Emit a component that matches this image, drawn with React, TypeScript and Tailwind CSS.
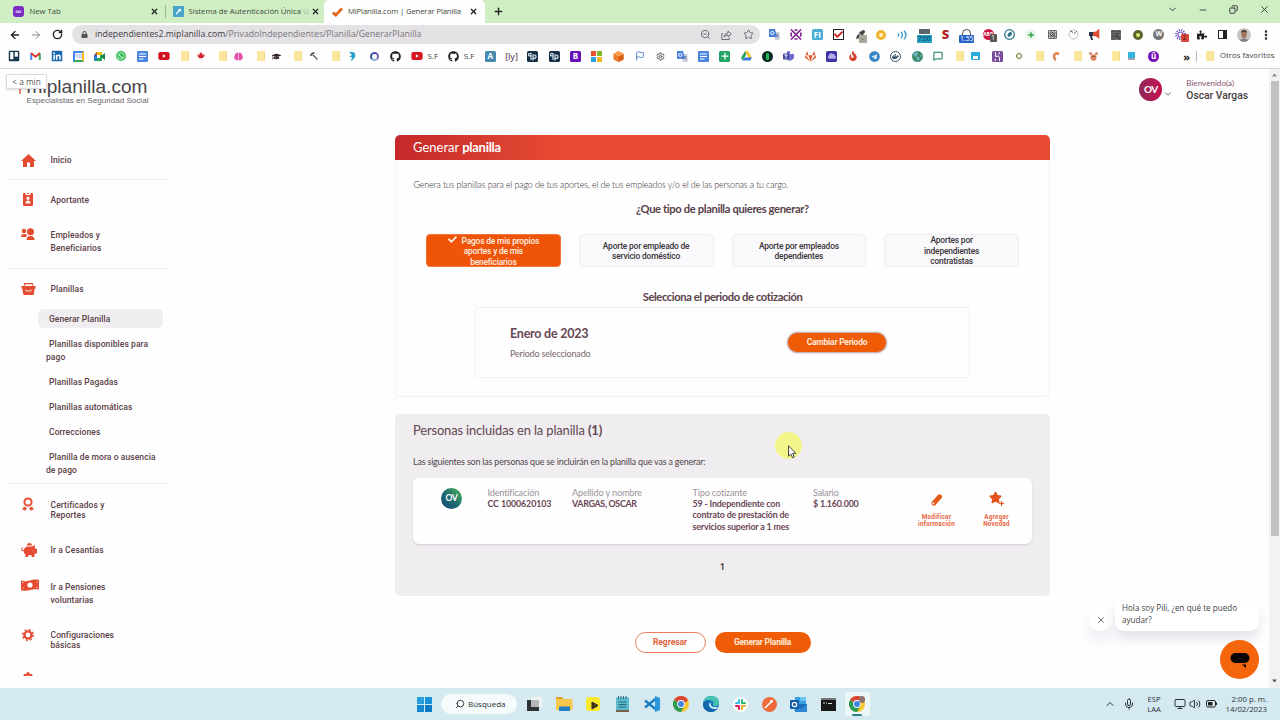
import type { ReactNode } from "react";
import { FaTrello, FaLinkedin, FaWhatsapp, FaYoutube, FaCanadianMapleLeaf, FaBrain, FaGraduationCap, FaGithub, FaGitlab, FaTelegram, FaDocker, FaFire, FaCloud, FaPuzzlePiece, FaPiggyBank, FaCheck, FaStar, FaLock, FaGlobeAmericas, FaEyeDropper, FaCog } from "react-icons/fa";
import { X, Plus, ArrowLeft, ArrowRight, RotateCw, ZoomOut, Star, ChevronDown, ChevronUp, Minus, Copy, Search, Mic, Volume2, Monitor, Flag, Settings, MessageSquare, Atom, MoreVertical } from "lucide-react";

function Slot({ children }: { children: ReactNode }) {
  return <div className="flex w-[21.35px] shrink-0 items-center justify-center">{children}</div>;
}

function Folder() {
  return <div className="h-[10px] w-[8px] shrink-0 rounded-[1px] border-r border-[#f3d983] bg-[#fae69c]" />;
}

function Pair({ children }: { children: ReactNode }) {
  return (
    <div className="flex w-[37.8px] shrink-0 items-center pl-[6.5px]">
      <Folder />
      <div className="ml-[6px] flex w-[12px] justify-center">{children}</div>
    </div>
  );
}

function Tile({ className, children }: { className: string; children?: ReactNode }) {
  return <div className={`flex h-[11px] w-[11px] items-center justify-center rounded-[1.5px] text-[8px] font-bold leading-none text-white ${className}`}>{children}</div>;
}

function Badge({ className, children }: { className: string; children: ReactNode }) {
  return <span className={`absolute rounded-[1px] text-center text-[6.5px] leading-[8px] ${className}`}>{children}</span>;
}

function DocIcon() {
  return (
    <svg width="11" height="11" viewBox="0 0 11 11">
      <rect width="11" height="11" rx="1" fill="#4a86e0" />
      <path d="M2 3h7M2 5.500h7M2 8h4.500" stroke="#fff" strokeWidth="1.2" />
    </svg>
  );
}

function TranslateIcon() {
  return (
    <svg width="11" height="11" viewBox="0 0 11 11">
      <path d="M4 3h6.500v8H6z" fill="#c9ced8" />
      <path d="M0 0h6l2 8H0z" fill="#4a80dc" />
      <circle cx="3.300" cy="4" r="1.600" fill="none" stroke="#fff" strokeWidth=".9" />
      <path d="M7 6h3M8.500 5v1q0 2 1.500 3" stroke="#65758c" strokeWidth=".7" fill="none" />
    </svg>
  );
}

function GmailIcon() {
  return (
    <svg width="11" height="8" viewBox="0 0 11 8">
      <path d="M1.200 8V1.500" stroke="#4285f4" strokeWidth="2" />
      <path d="M9.800 8V1.500" stroke="#34a853" strokeWidth="2" />
      <path d="M1 1l4.500 3.700L10 1" stroke="#e03b2f" strokeWidth="2" fill="none" />
    </svg>
  );
}

function MeetIcon() {
  return (
    <svg width="11" height="9" viewBox="0 0 11 9">
      <path d="M0 3l3-3h5v9H0z" fill="#22a455" />
      <path d="M0 3h3v5H0z" fill="#2a78e4" />
      <path d="M0 3l3-3v3z" fill="#e6402f" />
      <path d="M3 0h5v3H3z" fill="#f6bb17" />
      <path d="M3 3h3v3H3z" fill="#fff" />
      <path d="M7 4l4-3v7L7 5z" fill="#15883e" />
    </svg>
  );
}

function DriveIcon() {
  return (
    <svg width="11" height="10" viewBox="0 0 11 10">
      <path d="M4 0L0 7l1.700 2.500L5.500 3z" fill="#27a45c" />
      <path d="M4 0h3l4 7H7.600z" fill="#f8c52b" />
      <path d="M3.400 6.600H11L9.300 9.500H1.700z" fill="#3b78e0" />
    </svg>
  );
}

function WindowsTiles() {
  return (
    <div className="grid h-[11px] w-[11px] grid-cols-2 gap-[1px]">
      <div className="bg-[#e8502d]" />
      <div className="bg-[#7fb82c]" />
      <div className="bg-[#2ba1e0]" />
      <div className="bg-[#f5b724]" />
    </div>
  );
}

function PatreonTile() {
  return (
    <div className="flex h-[11px] w-[11px] items-center justify-center rounded-[1.5px] bg-[#152f49]">
      <svg width="9" height="9" viewBox="0 0 9 9" fill="none" stroke="#dfe9ef">
        <path d="M3 8V1.500H1.500q-1 0-1 1.200t1 1.200H3" strokeWidth="1.100" />
        <path d="M5 8.500V3h1.500q1.500 0 1.500 1.700T6.500 6.400H5" strokeWidth="1.200" />
      </svg>
    </div>
  );
}

function CheckLogo() {
  return (
    <svg width="11" height="10" viewBox="0 0 11 10">
      <path d="M.8 5.500l3 2.600L10 1.500" stroke="#e2661b" strokeWidth="2.800" fill="none" />
    </svg>
  );
}

function TabStrip() {
  return (
    <div className="flex h-[23px] shrink-0 items-center bg-[#cfeec4] font-['Open_Sans',sans-serif] text-[7.700px] text-[#3f4b3d]">
      <div className="flex w-[165px] items-center pl-[13px]">
        <div className="flex h-[11px] w-[11px] items-center justify-center rounded-[3px] bg-[#7c2bc4] text-[9px] leading-none text-white">∞</div>
        <span className="ml-[5.500px] flex-1">New Tab</span>
        <X size={9} strokeWidth={3.2} color="#222" className="mr-[6px]" />
      </div>
      <div className="h-[13px] w-px bg-[#9ab392]" />
      <div className="flex w-[158px] items-center pl-[6.500px]">
        <div className="flex h-[11px] w-[11px] items-center justify-center bg-[#4aa3cb]">
          <svg width="7" height="7" viewBox="0 0 7 7"><path d="M1 6l3-3" stroke="#fff" strokeWidth="1.300" /><circle cx="4.800" cy="2.200" r="1.400" fill="#fff" /></svg>
        </div>
        <span className="ml-[5px] w-[120px] whitespace-nowrap">Sistema de Autenticación Única <span className="opacity-30">U</span></span>
        <X size={9} strokeWidth={3.2} color="#222" className="ml-[2px]" />
      </div>
      <div className="flex h-full w-[161px] items-center rounded-t-[5px] bg-[#fefefe] pl-[8px]">
        <CheckLogo />
        <span className="ml-[5px] w-[114px] whitespace-nowrap tracking-[-0.130px]">MiPlanilla.com | Generar Planilla</span>
        <X size={9} strokeWidth={3.2} color="#222" className="ml-[6.500px]" />
      </div>
      <Plus size={11} strokeWidth={3} color="#222" className="ml-[8px]" />
      <div className="ml-auto flex items-center pb-[4px] pr-[10px] text-[#333]">
        <ChevronDown size={11} />
        <Minus size={10} className="ml-[20px]" />
        <Copy size={9} className="ml-[21px] -scale-x-100" strokeWidth={2.500} />
        <X size={11} className="ml-[21px]" />
      </div>
    </div>
  );
}

function Toolbar() {
  return (
    <div className="flex h-[23px] shrink-0 items-center pl-[9px] font-['Open_Sans',sans-serif]">
      <ArrowLeft size={12} strokeWidth={2.600} color="#222" />
      <ArrowRight size={12} strokeWidth={2} color="#888" className="ml-[9px]" />
      <RotateCw size={11} strokeWidth={3} color="#222" className="ml-[10px]" />
      <div className="ml-[9px] flex h-[18.500px] w-[688px] items-center rounded-full bg-[#e5e2e6] pl-[9px] text-[#5f6368]">
        <FaLock size={7} color="#555" />
        <span className="ml-[7px] flex-1 whitespace-nowrap text-[8.700px] tracking-[0.030px] text-[#77757a]">
          <span className="text-[#3c3a3e]">independientes2.miplanilla.com</span>/PrivadoIndependientes/Planilla/GenerarPlanilla
        </span>
        <Slot><ZoomOut size={11} /></Slot>
        <Slot><svg width="11" height="10" viewBox="0 0 11 10" fill="none" stroke="currentColor"><path d="M2 3.500H.8v6h7.500V7.500M3 7q.5-3.800 4-4V1l3.300 3L7 6.700V5Q4.500 5 3 7z" strokeWidth=".9" /></svg></Slot>
        <Slot><Star size={11} /></Slot>
        <div className="w-[1px]" />
      </div>
      <div className="ml-[4px] flex items-center">
        <Slot><TranslateIcon /></Slot>
        <Slot><svg width="12" height="11" viewBox="0 0 12 11"><path d="M1 .5l5 5 5-5M1 10.500l5-5 5 5M1.200 3.500v4M10.800 3.500v4M4.500 1h3M4.500 10h3" stroke="#7a2388" strokeWidth="1.600" fill="none" /></svg></Slot>
        <Slot><Tile className="bg-[#4aaed4]">FI</Tile></Slot>
        <Slot><div className="flex h-[11px] w-[11px] items-center justify-center border-[1.500px] border-[#222]"><FaCheck size={9} color="#c51c1c" /></div></Slot>
        <Slot><div className="relative"><FaEyeDropper size={9} color="#444" /><Badge className="left-[3px] top-[5px] w-[8px] bg-[#aaa79b] leading-[7px] text-[#555]">-</Badge></div></Slot>
        <Slot><div className="h-[10px] w-[10px] rounded-full border-[3px] border-[#eeb630] bg-[#fff3c4]" /></Slot>
        <Slot><svg width="11" height="10" viewBox="0 0 11 10" fill="none" stroke="#369bd0" strokeWidth="1.300"><path d="M1 3.500q1.500 1.500 0 3M4 2q3 3 0 6M7 .7q4 4.300 0 8.600" /></svg></Slot>
        <Slot><div className="relative h-[11px] w-[11px]"><div className="h-[5px] bg-[#5b6770]" /><Badge className="-left-[2px] top-[6px] w-[15px] bg-[#259dc5] text-[#0c3344]">7:00</Badge></div></Slot>
        <Slot><span className="text-[13px] font-extrabold leading-none text-[#b3261e]">S</span></Slot>
        <Slot><div className="relative h-[11px] w-[11px]"><div className="mx-auto h-[8px] w-[9px] rounded-t-full border border-[#444]" /><Badge className="-left-[2px] top-[6px] w-[15px] bg-[#2864c8] text-white">1.55</Badge></div></Slot>
        <Slot><div className="relative"><div className="h-[11px] w-[11px] rounded-full bg-[#cf1445] text-center text-[5px] font-bold leading-[10px] text-white">ABP</div><Badge className="left-[7px] top-[5px] w-[7px] bg-[#555] text-white">1</Badge></div></Slot>
        <Slot><svg width="11" height="11" viewBox="0 0 11 11"><circle cx="5.500" cy="5.500" r="4.800" fill="#fff" stroke="#2b7189" strokeWidth="1.200" /><path d="M7.500 2.500Q2 4 4 8q5-1 3.500-5.500z" fill="#2b7189" /></svg></Slot>
        <Slot><div className="flex h-[11px] w-[11px] items-center justify-center rounded-full bg-[#eaf5ea]"><Plus size={8} strokeWidth={4} color="#2ea34a" /></div></Slot>
        <Slot><div className="flex h-[9px] w-[9px] items-center justify-center rounded-[1px] border border-[#666] bg-[#ddd]"><Atom size={7} strokeWidth={3} color="#333" /></div></Slot>
        <Slot><svg width="11" height="11" viewBox="0 0 11 11" fill="none" stroke="#bbb" strokeWidth=".9"><circle cx="5.500" cy="5.500" r="4.500" /><path d="M2 1.500l3 2M6 4h2M8 2l1 1" stroke="#555" /></svg></Slot>
        <Slot><svg width="11" height="11" viewBox="0 0 11 11"><path d="M0 3h4v4H3l1 4H2L1 7H0z" fill="#28304e" /><path d="M4 3q4 0 5.500-3h.8v9.500h-.8Q8 7 4 7z" fill="#e14d33" /></svg></Slot>
        <Slot><svg width="10" height="10" viewBox="0 0 10 10"><rect width="10" height="10" fill="#777" /><path d="M1 1h3v3H1zM6 1h3v3H6zM1 6h3v3H1zM5 5h2v2H5zM7 7h2v2H7z" fill="none" stroke="#333" strokeDasharray="1.500 .7" /></svg></Slot>
        <Slot><div className="flex h-[10px] w-[10px] items-center justify-center rounded-full bg-[#59662e]"><div className="h-[4px] w-[4px] rounded-full bg-[#d8e86b]" /></div></Slot>
        <Slot><div className="flex h-[11px] w-[11px] items-center justify-center rounded-full bg-[#777] text-[7px] font-bold text-white">W</div></Slot>
        <Slot><div className="relative"><svg width="11" height="11" viewBox="0 0 11 11" fill="none" stroke="#7657c9"><circle cx="5.500" cy="5.500" r="2.500" strokeWidth="1.200" /><circle cx="5.500" cy="5.500" r="4.500" strokeWidth="2" strokeDasharray="1.200 1.156" /></svg><Badge className="left-[6px] top-[5px] w-[8px] bg-[#d9483b] text-[#551111]">2</Badge></div></Slot>
        <Slot><FaPuzzlePiece size={10} color="#222" /></Slot>
        <Slot><div className="h-[9px] w-[9px] border-[1.500px] border-r-[4px] border-[#222]" /></Slot>
        <Slot>
          <svg width="14" height="14" viewBox="0 0 14 14">
            <circle cx="7" cy="7" r="7" fill="#c9c5c0" />
            <ellipse cx="7" cy="6.500" rx="2.700" ry="3.700" fill="#a4735c" />
            <path d="M4 5q0-3 3-3t3 3q-1-1.500-3-1.500T4 5z" fill="#3d2e29" />
            <path d="M2.500 12q4.500-3 9 0-4.500 3.700-9 0z" fill="#7c8285" />
          </svg>
        </Slot>
        <Slot><MoreVertical size={12} strokeWidth={3} color="#222" /></Slot>
      </div>
    </div>
  );
}

function Bookmarks() {
  return (
    <div className="flex h-[23px] shrink-0 items-center border-b border-[#d9d7da] pb-[2px] pl-[3.700px] font-['Open_Sans',sans-serif] text-[8px] text-[#444]">
      <Slot><FaTrello size={12} color="#16384c" /></Slot>
      <Slot><GmailIcon /></Slot>
      <Slot><FaLinkedin size={12} color="#1767ac" /></Slot>
      <Slot><div className="flex h-[11px] w-[11px] items-center justify-center border-2 border-b-[#35a853] border-l-[#4285f4] border-r-[#f8bb1b] border-t-[#4285f4] text-[6px] leading-none text-[#3870cc]">10</div></Slot>
      <Slot><MeetIcon /></Slot>
      <Slot><div className="flex h-[10px] w-[10px] items-center justify-center rounded-full bg-[#2fbc52]"><FaWhatsapp size={8} color="#fff" /></div></Slot>
      <Slot><DocIcon /></Slot>
      <Slot><FaYoutube size={12} color="#d4141c" /></Slot>
      <Pair><FaCanadianMapleLeaf size={8} color="#d1202e" /></Pair>
      <Pair><FaBrain size={9} color="#e550ab" /></Pair>
      <Pair><FaGraduationCap size={9} color="#33222b" /></Pair>
      <Pair><svg width="8" height="8" viewBox="0 0 8 8" fill="none" stroke="#555"><path d="M2.500 2.500L7.500 7.500" strokeWidth="1.100" /><path d="M.7 4Q1 1 4.500.7" strokeWidth="1.500" /></svg></Pair>
      <Pair><svg width="8" height="9" viewBox="0 0 8 9"><path d="M1 0h4q3 1 2 5-2 3-4 4l1-4H1l3-2z" fill="#269ec9" /></svg></Pair>
      <Slot><div className="h-[9px] w-[9px] rounded-full border-[2.500px] border-b-[#8ab1d9] border-l-[#2e58a5] border-r-[#7c5bb4] border-t-[#564aa5]" /></Slot>
      <Slot><FaGithub size={11} color="#222" /></Slot>
      <div className="flex w-[36.700px] shrink-0 items-center pl-[5px]"><FaYoutube size={12} color="#d4141c" /><span className="ml-[4.500px]">S.F</span></div>
      <div className="flex w-[36.700px] shrink-0 items-center pl-[5px]"><FaGithub size={11} color="#222" /><span className="ml-[5px]">S.F</span></div>
      <Slot><Tile className="bg-[#4589af]">A</Tile></Slot>
      <Slot><span className="text-[9px] leading-none text-[#44203c]">[ly]</span></Slot>
      <Slot><PatreonTile /></Slot>
      <Slot><PatreonTile /></Slot>
      <Slot><Tile className="bg-[#6610bd]">B</Tile></Slot>
      <Slot><WindowsTiles /></Slot>
      <Slot><svg width="11" height="11" viewBox="0 0 11 11"><path d="M.5 3l5-3 5 3v5.500l-5 2.500-5-2.500z" fill="#ee7b29" /><path d="M5.500 5.500l5-2.500v5.500l-5 2.500z" fill="#d95d15" /><path d="M.5 3l5-3 5 3-5 2.500z" fill="#fb9d52" /></svg></Slot>
      <Slot><Flag size={10} color="#3a74b8" /></Slot>
      <Slot><Settings size={9} strokeWidth={2.600} color="#555" /></Slot>
      <Slot><TranslateIcon /></Slot>
      <Slot><DocIcon /></Slot>
      <Slot><Tile className="bg-[#23a565]"><Plus size={10} strokeWidth={3} /></Tile></Slot>
      <Slot><DriveIcon /></Slot>
      <Slot><div className="flex h-[11px] w-[11px] items-center justify-center rounded-full bg-[#072b23]"><div className="h-[7px] w-[3px] rounded-full bg-[#26b857]" /></div></Slot>
      <Slot><svg width="11" height="10" viewBox="0 0 11 10"><circle cx="5.500" cy="1.700" r="1.700" fill="#6265c4" /><path d="M3 3h8v4q-3 4-6.500 2z" fill="#6b6dcc" /><rect y="2.500" width="6" height="6" rx="1" fill="#4447a4" /><path d="M1.300 4h3.400M3 4v3.500" stroke="#fff" strokeWidth=".9" /></svg></Slot>
      <Slot><FaGitlab size={11} color="#e1542c" /></Slot>
      <Slot><Tile className="bg-[#3f35a5]"><FaCloud size={8} color="#b5b0ec" /></Tile></Slot>
      <Slot><FaFire size={10} color="#d73d2c" /></Slot>
      <Slot><FaTelegram size={11} color="#3584c7" /></Slot>
      <Slot><div className="flex h-[11px] w-[11px] items-center justify-center rounded-full border border-[#335160]"><FaDocker size={7} color="#27495c" /></div></Slot>
      <Slot><div className="rounded-full bg-[#7db9df]"><FaGlobeAmericas size={11} color="#3b8a63" /></div></Slot>
      <Slot><MessageSquare size={10} strokeWidth={3} color="#3d957c" /></Slot>
      <Pair><div className="flex h-[8px] w-[9px] items-end justify-center rounded-[1px] bg-[#2aaadd]"><div className="mb-[1px] h-[3px] w-[5px] bg-white" /></div></Pair>
      <Slot><Tile className="bg-[#774c98]"><svg width="7" height="9" viewBox="0 0 7 9" fill="none" stroke="#fff"><path d="M1.500 0v4.500Q5.500 3 5.500 5.500V9M1.300 6.500V9M5.500 0q0 1.500-1 2.500" /></svg></Tile></Slot>
      <Slot><div className="h-[6px] w-[6px] rounded-full border-[1.700px] border-[#57762c]" /></Slot>
      <Pair><svg width="9" height="9" viewBox="0 0 9 9"><path d="M7 2Q3 0 2 4q0 3 2 4" stroke="#dd8b54" strokeWidth="2.600" fill="none" /></svg></Pair>
      <Pair><svg width="9" height="9" viewBox="0 0 9 9" fill="#d98564"><circle cx="1.500" cy="1.500" r="1.500" /><circle cx="7.500" cy="1.500" r="1.500" /><ellipse cx="4.500" cy="5.500" rx="3" ry="3.300" /><circle cx="3.400" cy="4.500" r=".6" fill="#502a20" /><circle cx="5.600" cy="4.500" r=".6" fill="#502a20" /></svg></Pair>
      <Pair><div className="h-[8px] w-[7px] border-b-2 border-[#a3a3b0] bg-[#35b6dc]" /></Pair>
      <Slot><div className="flex h-[11px] w-[11px] items-center justify-center rounded-full bg-[#7514b8] text-[8px] font-bold leading-none text-white">û</div></Slot>
      <div className="ml-auto flex items-center pr-[7px]">
        <span className="text-[11px] font-bold leading-none text-[#222]">»</span>
        <div className="ml-[6px] mr-[9px] h-[11px] w-px bg-[#bbb]" />
        <Folder />
        <span className="ml-[6px] w-[53px] whitespace-nowrap text-[7.800px]">Otros favoritos</span>
      </div>
    </div>
  );
}

const subItems = [
  { label: "Planillas disponibles para", rest: "pago" },
  { label: "Planillas Pagadas" },
  { label: "Planillas automáticas" },
  { label: "Correcciones" },
  { label: "Planilla de mora o ausencia", rest: "de pago" },
];

function MenuRow({ icon, className, iconClass, children }: { icon: ReactNode; className: string; iconClass?: string; children: ReactNode }) {
  return (
    <div className={`flex shrink-0 items-center ${className}`}>
      <div className={`flex w-[40px] justify-center text-[#e54b30] ${iconClass ?? ""}`}>{icon}</div>
      <div className="pl-[2.500px] pt-[1px]">{children}</div>
    </div>
  );
}

function Divider() {
  return <div className="h-px w-[161px] shrink-0 bg-[#f0eef1]" />;
}

function Sidebar() {
  return (
    <aside className="flex h-[541px] w-[180px] shrink-0 flex-col overflow-hidden pl-[8px] pt-[6px] font-[Roboto,sans-serif] text-[8.500px] font-medium leading-[13px] tracking-[0.080px] text-[#5b4148]">
      <MenuRow
        className="h-[38px]"
        icon={
          <svg width="15" height="13" viewBox="0 0 15 13">
            <path d="M7.500 0L15 7h-2v6H9V8.500H6V13H2V7H0z" fill="currentColor" />
          </svg>
        }
      >
        Inicio
      </MenuRow>
      <Divider />
      <MenuRow
        className="h-[39px]"
        icon={
          <svg width="10" height="13" viewBox="0 0 10 13">
            <path d="M0 1q0-1 1-1h1.500v2h5V0H9q1 0 1 1v11q0 1-1 1H1q-1 0-1-1z" fill="currentColor" />
            <circle cx="5" cy="5.200" r="1.600" fill="#fff" />
            <path d="M2.500 10.500q0-3 2.500-3t2.500 3z" fill="#fff" />
            <path d="M4 0h2v1H4z" fill="currentColor" />
          </svg>
        }
      >
        Aportante
      </MenuRow>
      <MenuRow
        className="mb-[4px] h-[45px]"
        iconClass="-mt-[16px]"
        icon={
          <svg width="14" height="12" viewBox="0 0 14 12" fill="currentColor">
            <circle cx="3" cy="3" r="2.200" />
            <path d="M0 9q0-3 3-3 2 0 3 1l-1 2z" />
            <circle cx="9.500" cy="3.700" r="3.500" />
            <path d="M5.500 12q0-4 4-4t4.200 4z" />
          </svg>
        }
      >
        Empleados y<br />Beneficiarios
      </MenuRow>
      <Divider />
      <MenuRow
        className="h-[40px]"
        icon={
          <svg width="15" height="12" viewBox="0 0 15 12">
            <path d="M3.500 2.500V1q0-.5 1-.5h6q1 0 1 .5v1.500" stroke="currentColor" strokeWidth="1.300" fill="none" />
            <path d="M.5 3h14v2.500H.5zM1.200 5h12.600l-1 6q-.2 1-1 1H3.200q-.8 0-1-1z" fill="currentColor" />
            <path d="M5 6.500v1.500h5V6.500" stroke="#fff" strokeWidth=".8" fill="none" />
          </svg>
        }
      >
        Planillas
      </MenuRow>
      <div className="ml-[30px] h-[19px] w-[125px] shrink-0 rounded-[5px] bg-[#f0eef1] pl-[11px] leading-[20px]">Generar Planilla</div>
      <div className="ml-[38px] flex flex-col gap-[12px] pb-[6px] pt-[10px]">
        {subItems.map((item) => (
          <div key={item.label} className="whitespace-nowrap indent-[3px]">
            {item.label}
            {item.rest && <div className="indent-0">{item.rest}</div>}
          </div>
        ))}
      </div>
      <Divider />
      <MenuRow
        className="h-[50px] leading-[10px]"
        iconClass="-mt-[10px]"
        icon={
          <svg width="12" height="14" viewBox="0 0 12 14">
            <circle cx="6" cy="5" r="3.600" fill="none" stroke="currentColor" strokeWidth="2" />
            <path d="M2 9.500l3 1.500-2 3-1-1.200H0zM10 9.500L7 11l2 3 1-1.200h2z" fill="currentColor" />
          </svg>
        }
      >
        Certificados y<br />Reportes
      </MenuRow>
      <MenuRow className="h-[31px]" iconClass="pl-[2px]" icon={<FaPiggyBank size={16} />}>Ir a Cesantías</MenuRow>
      <MenuRow
        className="h-[56px]"
        iconClass="-mt-[16px] pl-[4px]"
        icon={
          <svg width="18" height="12" viewBox="0 0 18 12">
            <path d="M0 1.500q5 1.500 9 0t9-.8v9.800q-5-.8-9 .5t-9 .2z" fill="currentColor" />
            <circle cx="9" cy="6" r="2.600" fill="#fff" />
            <path d="M1.500 3.500h1M1.500 9h1M15.500 3h1M15.500 8.500h1" stroke="#fff" />
          </svg>
        }
      >
        Ir a Pensiones<br />voluntarias
      </MenuRow>
      <MenuRow
        className="h-[37px] leading-[10px]"
        iconClass="-mt-[9px]"
        icon={
          <svg width="12" height="12" viewBox="0 0 12 12" fill="none" stroke="currentColor">
            <circle cx="6" cy="6" r="3.500" strokeWidth="2.200" />
            <circle cx="6" cy="6" r="5.200" strokeWidth="1.600" strokeDasharray="2.040" />
          </svg>
        }
      >
        Configuraciones<br />básicas
      </MenuRow>
      <div className="mt-[14px] flex w-[40px] shrink-0 justify-center text-[#e54b30]">
        <FaCog size={10} />
      </div>
    </aside>
  );
}

function TypeButton({ children }: { children: ReactNode }) {
  return <div className="flex flex-1 items-center justify-center rounded-[4px] border border-[#eeecf0] bg-[#f9f8fa] pt-px text-center">{children}</div>;
}

function GenerateCard() {
  return (
    <section className="flex h-[262px] flex-col">
      <div className="h-[25px] shrink-0 rounded-t-[5px] bg-linear-to-r from-[#c5282a] via-[#e64a33] via-25% to-[#e84c32] pl-[18px] text-[13px] leading-[25px] text-white">
        Generar <b className="tracking-[-0.300px]">planilla</b>
      </div>
      <div className="flex-1 rounded-b-[4px] border border-t-0 border-[#f4f2f4]">
        <p className="pl-[17.500px] pt-[18px] text-[8.900px] font-light leading-[13px] tracking-[-0.130px] text-[#2e282c]">Genera tus planillas para el pago de tus aportes, el de tus empleados y/o el de las personas a tu cargo.</p>
        <h3 className="mt-[11px] text-center text-[11.200px] font-bold leading-[14px] tracking-[-0.360px] text-[#59414b]">¿Que tipo de planilla quieres generar?</h3>
        <div className="mx-[30px] mt-[18px] flex h-[33px] gap-[18px] font-[Roboto,sans-serif] text-[8.400px] font-medium leading-[10.400px] tracking-[-0.170px] text-[#38343a]">
          <div className="flex flex-1 items-center justify-center rounded-[4px] border border-[#f3753a] bg-[#f05409] pt-px text-center text-[#fff0e4]">
            <span><FaCheck size={9} className="mr-[5px] inline-block align-[0px]" />Pagos de mis propios<br />aportes y de mis<br />beneficiarios</span>
          </div>
          <TypeButton>Aporte por empleado de<br />servicio doméstico</TypeButton>
          <TypeButton>Aporte por empleados<br />dependientes</TypeButton>
          <TypeButton>Aportes por<br />independientes<br />contratistas</TypeButton>
        </div>
        <h3 className="mt-[23px] text-center text-[11.200px] font-bold leading-[14px] tracking-[-0.400px] text-[#59414b]">Selecciona el periodo de cotización</h3>
        <div className="mx-[79px] mt-[3px] flex h-[71px] items-center rounded-[3px] border border-[#f3f1f3] pl-[34px]">
          <div className="w-[277px]">
            <div className="text-[12.500px] font-bold leading-[15px] tracking-[-0.230px] text-[#684653]">Enero de 2023</div>
            <div className="mt-[6px] text-[9px] leading-[13px] tracking-[-0.170px] text-[#78666d]">Periodo seleccionado</div>
          </div>
          <button className="h-[21px] w-[100px] rounded-full border border-[#c9b7b8] bg-[#ef5a05] font-[Roboto,sans-serif] text-[8.500px] font-bold tracking-[-0.230px] text-[#ffe9da] shadow-[0_0_2px_#b9a9b0]">Cambiar Periodo</button>
        </div>
      </div>
    </section>
  );
}

function Field({ label, value, className }: { label: string; value: ReactNode; className: string }) {
  return (
    <div className={`shrink-0 whitespace-nowrap ${className}`}>
      <div className="text-[9.100px] leading-[10px] tracking-[-0.150px] text-[#9c9399]">{label}</div>
      <div className="text-[8.900px] font-bold leading-[11.300px] tracking-[-0.180px] text-[#6b4654]">{value}</div>
    </div>
  );
}

function PeopleCard() {
  return (
    <section className="mt-[17px] h-[182px] rounded-[5px] bg-[#f0edf0] px-[18px] pt-[8px]">
      <h2 className="text-[12.900px] leading-[16px] tracking-[-0.130px] text-[#5f454f]">Personas incluidas en la planilla <b>(1)</b></h2>
      <p className="mt-[17px] text-[8.900px] leading-[13px] tracking-[-0.160px] text-[#4e444b]">Las siguientes son las personas que se incluirán en la planilla que vas a generar:</p>
      <div className="mt-[10px] flex h-[66px] rounded-[6px] bg-[#fefefe] pl-[28px] pt-[10px] shadow-[0_1px_2px_#d5cfd5]">
        <div className="mr-[25.500px] flex h-[21px] w-[21px] shrink-0 items-center justify-center rounded-full bg-linear-to-tr from-[#174277] via-[#216e70] to-[#4fb947] text-[8.500px] font-bold tracking-[-0.300px] text-white">OV</div>
        <Field className="w-[84.500px]" label="Identificación" value={<span className="tracking-[-0.110px]">CC 1000620103</span>} />
        <Field className="w-[120.500px]" label="Apellido y nombre" value={<span className="tracking-[-0.320px]">VARGAS, OSCAR</span>} />
        <Field className="w-[120.500px]" label="Tipo cotizante" value={<>59 - Independiente con<br />contrato de prestación de<br />servicios superior a 1 mes</>} />
        <Field className="w-[93.500px]" label="Salario" value="$ 1.160.000" />
        <div className="flex w-[60px] shrink-0 flex-col items-center pt-[3px] text-center font-[Roboto,sans-serif] text-[6.300px] font-bold leading-[7.200px] tracking-[0.250px] text-[#e8673f]">
          <svg width="14" height="17" viewBox="0 0 14 17">
            <path d="M3.700 12.300l6-6.600" stroke="#e55b1a" strokeWidth="4.800" strokeLinecap="round" />
            <circle cx="3.300" cy="12.500" r=".9" fill="#fff" />
            <path d="M7.500 5l3 2.700" stroke="#c94b12" strokeWidth=".6" />
          </svg>
          <span className="mt-[6px]">Modificar<br />información</span>
        </div>
        <div className="flex w-[60px] shrink-0 flex-col items-center pt-[3px] text-center font-[Roboto,sans-serif] text-[6.300px] font-bold leading-[7.200px] tracking-[0.250px] text-[#e8673f]">
          <div className="flex h-[17px] items-start">
            <FaStar size={13} color="#e5521d" />
            <Plus size={7} strokeWidth={4} color="#e5521d" className="-ml-[4px] mt-[9px]" />
          </div>
          <span className="mt-[6px]">Agregar<br />Novedad</span>
        </div>
      </div>
      <div className="mt-[17px] text-center font-[Roboto,sans-serif] text-[8.500px] font-bold leading-[13px] text-[#443a40]">1</div>
    </section>
  );
}

function ChatWidget() {
  return (
    <div className="absolute right-[21px] top-[602px] flex w-[170px] flex-col items-end font-['Open_Sans',sans-serif]">
      <div className="flex w-full items-end">
        <div className="mr-[3px] flex h-[23px] w-[23px] items-center justify-center rounded-full bg-white shadow-[0_10px_14px_#eeebf2]">
          <X size={10} color="#555" />
        </div>
        <div className="h-[29px] w-[144px] rounded-b-[9px] bg-white pl-[7px] text-[8.100px] leading-[12px] text-[#443f44] shadow-[0_8px_12px_#e6e3eb]">
          Hola soy Pili, ¿en qué te puedo ayudar?
        </div>
      </div>
      <div className="mt-[9px] flex h-[39px] w-[39px] items-center justify-center rounded-full bg-[#f5650c]">
        <svg width="20" height="16" viewBox="0 0 20 16">
          <rect x=".5" y="1" width="19" height="10" rx="5" fill="#080504" />
          <path d="M12 12.500h4v3.500z" fill="#080504" />
        </svg>
      </div>
    </div>
  );
}

function TaskItem({ active, children }: { active?: boolean; children: ReactNode }) {
  return (
    <div className="flex w-[29.350px] justify-center">
      <div className={`flex h-[24px] w-[25px] items-center justify-center rounded-[2px] ${active ? "bg-[#edf6f9]" : ""}`}>{children}</div>
    </div>
  );
}

function ChromeLogo() {
  return (
    <svg width="16" height="16" viewBox="0 0 16 16">
      <circle cx="8" cy="8" r="8" fill="#f8c62b" />
      <path d="M8 8L1.070 4A8 8 0 0 1 14.930 4z" fill="#db4437" />
      <path d="M8 8L1.070 4A8 8 0 0 0 8 16l3.500-6z" fill="#2c9b55" />
      <path d="M8 4h6.930L12 7z" fill="#db4437" />
      <circle cx="8" cy="8" r="3.900" fill="#fff" />
      <circle cx="8" cy="8" r="3" fill="#4285e0" />
    </svg>
  );
}

function Taskbar() {
  return (
    <footer className="flex h-[32px] shrink-0 items-center bg-[#d4e9f0] pl-[411px] font-['Open_Sans',sans-serif] text-[#2c3438]">
      <div className="flex w-[26px] justify-center">
        <div className="grid h-[15px] w-[15px] grid-cols-2 gap-[1px]">
          <div className="bg-[#26a0dd]" />
          <div className="bg-[#1693d8]" />
          <div className="bg-[#118ad1]" />
          <div className="bg-[#087bc4]" />
        </div>
      </div>
      <div className="ml-[4px] mr-[3px] flex h-[20px] w-[76px] items-center rounded-full bg-[#f5fafc] pl-[14px] text-[8px]">
        <Search size={10} strokeWidth={2.200} className="-scale-x-100" />
        <span className="ml-[3px]">Búsqueda</span>
      </div>
      <TaskItem><svg width="15" height="14" viewBox="0 0 15 14"><path d="M4 0h11v10H4z" fill="#eff2f3" /><path d="M0 3h12v11H0z" fill="#303436" /><path d="M4 3h8v7H4z" fill="#b5b9bb" /></svg></TaskItem>
      <TaskItem><svg width="17" height="14" viewBox="0 0 17 14"><path d="M0 1q0-1 1-1h5l1.500 2H0z" fill="#d99f24" /><path d="M0 2h16.500v11H0z" fill="#f5c84c" /><path d="M3 9.500h11V14H3z" fill="#267fc1" /></svg></TaskItem>
      <TaskItem><div className="flex h-[14px] w-[14px] items-end justify-end rounded-[3px] bg-[#f8e92b] p-[1px]"><svg width="8" height="8" viewBox="0 0 8 8"><path d="M1 0v7l6-3.500zM1 1l3 5" fill="#574e0a" stroke="#222" /></svg></div></TaskItem>
      <TaskItem><svg width="13" height="16" viewBox="0 0 13 16"><rect y="1.500" width="13" height="13" fill="#5cbbcc" /><path d="M0 14h13v2H0z" fill="#7b6052" /><path d="M2.500 0v3M5 0v3M7.500 0v3M10 0v3M2.500 6h8M2.500 8.500h8M2.500 11h8" stroke="#1e5f75" strokeWidth=".9" /></svg></TaskItem>
      <TaskItem><svg width="16" height="16" viewBox="0 0 16 16"><path d="M12 2.500L1 11.500M12 13.500L1 4.500" stroke="#1b7cc2" strokeWidth="2.400" /><path d="M11 0l5 2v12l-5 2z" fill="#2996dc" /></svg></TaskItem>
      <TaskItem><ChromeLogo /></TaskItem>
      <TaskItem><svg width="16" height="16" viewBox="0 0 16 16"><circle cx="8" cy="8" r="8" fill="#187ac2" /><path d="M0 8Q1 0 8 0q8 0 8 7-1 4-6 3 2-5-3-6Q2 4 0 8z" fill="#43c5b1" /><path d="M0 8q1-4 6-4-3 3 0 8 3 3 8 1-5 5-10 2-4-2-4-7z" fill="#1463ac" /><path d="M8 7q-2 5 7 4l-2 2Q7 13 6 9q0-2 2-2z" fill="#e4f3f8" /></svg></TaskItem>
      <TaskItem>
        <div className="flex h-[15px] w-[15px] items-center justify-center rounded-full bg-white">
          <svg width="11" height="11" viewBox="0 0 11 11" strokeWidth="2" strokeLinecap="round"><path d="M4 1v3M1 4h3" stroke="#36bde8" /><path d="M7 1v3M10 4H7.500" stroke="#2db67d" /><path d="M7 7v3M10 7H7" stroke="#e6b12b" /><path d="M4 7v3M1 7h3" stroke="#df1d59" /></svg>
        </div>
      </TaskItem>
      <TaskItem><div className="flex h-[15px] w-[15px] items-center justify-center rounded-full bg-[#ee6b3b]"><svg width="10" height="10" viewBox="0 0 10 10"><path d="M1 9l6-6" stroke="#fff" strokeWidth="1.600" /><circle cx="7.500" cy="2.300" r="1.500" fill="#fff" /></svg></div></TaskItem>
      <TaskItem><svg width="17" height="15" viewBox="0 0 17 15"><path d="M5 0h11v8H5z" fill="#39a1df" /><path d="M10 0h6v4h-6z" fill="#68c3ed" /><path d="M4 7h13v8H5z" fill="#1b6fbc" /><path d="M5 8l6 4 6-5v8H5z" fill="#2b87d0" /><rect y="3" width="9" height="9" rx="1" fill="#105ba5" /><circle cx="4.500" cy="7.500" r="2.200" fill="none" stroke="#fff" strokeWidth="1.300" /></svg></TaskItem>
      <TaskItem><svg width="15" height="13" viewBox="0 0 15 13"><rect width="15" height="13" fill="#171717" /><path d="M0 0h15v2H0z" fill="#777" /><path d="M2 5h2M5 5h1M7 5.500h4" stroke="#ddd" /></svg></TaskItem>
      <TaskItem active><div className="relative"><ChromeLogo /><div className="absolute right-0 top-0 h-[7px] w-[6px] rounded-full bg-[#8f7469]" /><div className="absolute -bottom-[4px] left-[3px] h-[2px] w-[10px] rounded-full bg-[#327e88]" /></div></TaskItem>
      <div className="ml-auto flex items-center pr-[13px] text-[7.800px] leading-[10.500px]">
        <ChevronUp size={12} />
        <Mic size={12} className="ml-[7px]" />
        <div className="ml-[11px] w-[16px] text-center text-[7.600px]">ESP<br />LAA</div>
        <Monitor size={12} className="ml-[12px]" />
        <Volume2 size={12} className="ml-[3px]" />
        <svg width="11" height="8" viewBox="0 0 11 8" className="ml-[5px]"><rect x=".5" y=".5" width="9" height="6.500" rx="1.500" fill="none" stroke="#222" /><path d="M2 2h4.500v3.500H2zM10 2.500h1V5h-1z" fill="#222" /></svg>
        <div className="ml-[8px] w-[42px] whitespace-nowrap text-right">2:00 p. m.<br />14/02/2023</div>
      </div>
    </footer>
  );
}

export default function App() {
  return (
    <div className="relative flex h-[720px] w-[1280px] flex-col overflow-hidden bg-[#fefefe] font-[Lato,sans-serif]">
      <TabStrip />
      <Toolbar />
      <Bookmarks />
      <div className="flex h-[619px] shrink-0">
        <div className="w-[1269px]">
          <header className="flex h-[66px] justify-between">
            <div className="relative pl-[26.500px] pt-[7px] font-['Liberation_Sans',sans-serif]">
              <div className="text-[19.100px] leading-[21px] text-[#48464a]">miplanilla.com</div>
              <div className="mt-[-1px] text-[8.100px] leading-[10px] text-[#6b686c]">Especialistas en Seguridad Social</div>
              <div className="absolute left-[19px] top-[19px] h-[6px] w-[2px] bg-[#e88b78]" />
              <div className="absolute left-[6px] top-[5px] h-[15px] w-[41px] rounded-[1px] border border-[#dcdadd] bg-white text-center font-['Open_Sans',sans-serif] text-[8.300px] leading-[13px] text-[#555] shadow-sm">&lt; a min</div>
            </div>
            <div className="flex items-start pr-[21px] pt-[9px]">
              <div className="flex h-[23px] w-[23px] items-center justify-center rounded-full bg-linear-to-r from-[#912659] to-[#c40a50] text-[10px] font-bold tracking-[-0.500px] text-white">OV</div>
              <ChevronDown size={10} color="#555" className="ml-[1px] mt-[11px]" />
              <div className="ml-[13px] font-[Roboto,sans-serif]">
                <div className="font-[Lato,sans-serif] text-[8.100px] leading-[11px] text-[#84566c]">Bienvenido(a)</div>
                <div className="text-[10.300px] font-medium leading-[13px] text-[#493d43]">Oscar Vargas</div>
              </div>
            </div>
          </header>
          <div className="flex">
            <Sidebar />
            <main className="ml-[215px] w-[655px]">
              <GenerateCard />
              <PeopleCard />
              <div className="mt-[36px] flex justify-center gap-[9px] font-[Roboto,sans-serif] text-[8.500px] font-bold tracking-[-0.050px]">
                <button className="h-[21px] w-[71px] rounded-full border border-[#e77b5c] text-[#e3633e]">Regresar</button>
                <button className="h-[21px] w-[96px] rounded-full bg-[#ee5c07] tracking-[-0.230px] text-[#ffebdc]">Generar Planilla</button>
              </div>
            </main>
          </div>
        </div>
        <div className="flex w-[11px] flex-col items-center justify-between bg-[#f3f1f4] pb-[5px] pt-[4px]">
          <div className="flex flex-col items-center">
            <svg width="5" height="4" viewBox="0 0 5 4"><path d="M0 3.500L2.500.5 5 3.500z" fill="#888" /></svg>
            <div className="mt-[4px] h-[455px] w-[8px] bg-[#c2c0c3]" />
          </div>
          <svg width="5" height="4" viewBox="0 0 5 4"><path d="M0 .5h5L2.500 3.500z" fill="#555" /></svg>
        </div>
      </div>
      <Taskbar />
      <ChatWidget />
      <div className="absolute left-[775px] top-[432px] h-[27px] w-[27px] rounded-full bg-[#f3f58b]" />
      <svg className="absolute left-[788px] top-[445px]" width="9" height="14" viewBox="0 0 9 14">
        <path d="M.5.7v10.500l2.400-2.200 1.600 3.800 1.700-.8-1.600-3.600h3.200z" fill="#fff" stroke="#333" strokeWidth=".9" />
      </svg>
    </div>
  );
}
